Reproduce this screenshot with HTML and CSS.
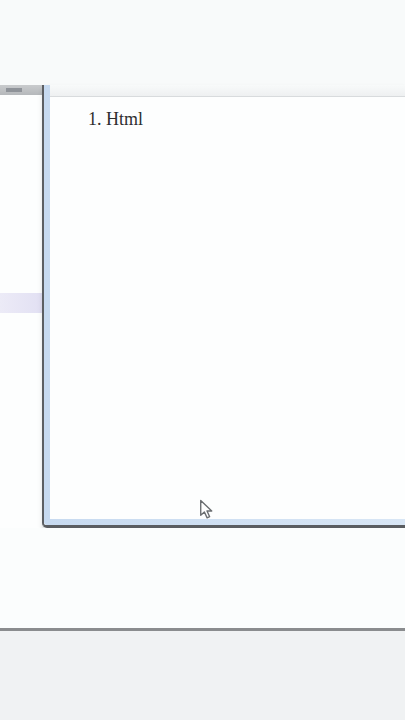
FILE: index.html
```html
<!DOCTYPE html>
<html>
<head>
<meta charset="utf-8">
<link rel="stylesheet" href="styles.css">
</head>
<body>
<div class="screen">
  <div class="top"></div>
  <div class="desk">
    <div class="behind">
      <div class="behind-bar"><span class="seg"></span></div>
      <div class="behind-body">
        <div class="hl"></div>
      </div>
    </div>
    <div class="window">
      <div class="frame">
        <div class="content">
          <div class="content-head"></div>
          <ol class="list">
            <li>Html</li>
          </ol>
          <div class="cursor">
            <svg width="15" height="21" viewBox="0 0 14 20"><path d="M1.5 1.5 L1.5 15.5 L5 12.3 L7.6 18 L10 16.9 L7.5 11.4 L12 11.4 Z" fill="#fff" stroke="#6a6d70" stroke-width="1.3" stroke-linejoin="round"/></svg>
          </div>
        </div>
      </div>
    </div>
  </div>
  <div class="below"></div>
  <div class="footer"></div>
</div>
</body>
</html>
```
FILE: styles.css
```css
html, body {
  margin: 0;
  padding: 0;
  width: 405px;
  height: 720px;
  overflow: hidden;
  background: #f9fbfb;
}
.screen {
  display: flex;
  flex-direction: column;
  width: 405px;
  height: 720px;
}
.top {
  height: 85px;
  background: #f8fafa;
  flex: none;
}
.desk {
  display: flex;
  height: 443px;
  flex: none;
}
.behind {
  width: 42px;
  flex: none;
  display: flex;
  flex-direction: column;
}
.behind-bar {
  height: 10px;
  background: linear-gradient(#c9cbcd, #b5b8bb);
  display: flex;
  padding-left: 6px;
  align-items: center;
}
.behind-bar .seg {
  width: 16px;
  height: 4px;
  background: #8f9399;
}
.behind-body {
  flex: 1;
  background: #fdfefe;
  padding-top: 198px;
}
.hl {
  height: 20px;
  background: linear-gradient(90deg, #ecebf7, #e2e0f3);
}
.window {
  flex: 1;
  min-width: 0;
  border-left: 2px solid #5c5f63;
  border-bottom: 3px solid #5a5d61;
  border-bottom-left-radius: 5px;
  box-shadow: 2px 5px 6px rgba(0,0,0,0.22);
  display: flex;
  flex-direction: column;
}
.frame {
  flex: 1;
  display: flex;
  padding: 0 0 6px 6px;
  background: linear-gradient(90deg, #c7daf0, #d8e6f5);
  border-bottom-left-radius: 3px;
}
.content {
  flex: 1;
  background: #fdfefe;
  display: flex;
  flex-direction: column;
  position: relative;
}
.content-head {
  height: 11px;
  background: linear-gradient(#f8fafa, #eef0f1);
  border-bottom: 1px solid #d8dbdd;
  flex: none;
}
.list {
  margin: 11px 0 0;
  padding-left: 56px;
  font-family: "Liberation Serif", "Times New Roman", serif;
  font-size: 18px;
  color: #2e2e2e;
  line-height: 22px;
}
.cursor {
  position: absolute;
  left: 149px;
  top: 414px;
  line-height: 0;
}
.below {
  height: 100px;
  background: #fbfdfd;
  flex: none;
}
.footer {
  flex: 1;
  border-top: 3px solid #8a8c8e;
  background: #f0f2f3;
}
```
